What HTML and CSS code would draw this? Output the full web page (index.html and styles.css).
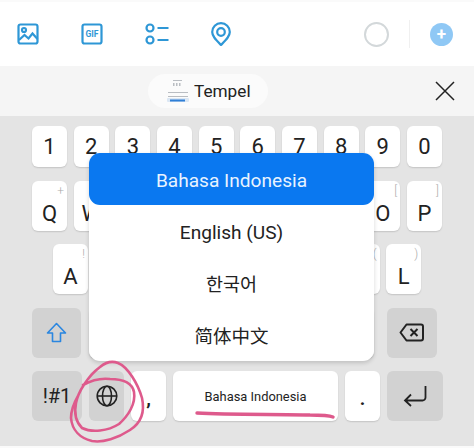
FILE: index.html
```html
<!DOCTYPE html>
<html lang="id">
<head>
<meta charset="utf-8">
<title>Keyboard</title>
<link rel="stylesheet" href="styles.css">
</head>
<body>
<div class="screen">
  <header class="toolbar">
    <div class="tools">
      <svg class="icon" width="22" height="22" viewBox="0 0 22 22" fill="none" stroke="#2e97d6" stroke-width="2.200"><rect x="1.500" y="1.500" width="19" height="19" rx="2"/><circle cx="7" cy="7" r="2"/><path d="M2 17l5.500-5 4 3.500 4-5 5 5.500"/></svg>
      <svg class="icon" width="22" height="22" viewBox="0 0 22 22" fill="none"><rect x="1.500" y="1.500" width="19" height="19" rx="2" stroke="#2e97d6" stroke-width="2.200"/><text x="11" y="14" class="gif">GIF</text></svg>
      <svg class="icon" width="24" height="22" viewBox="0 0 24 22" fill="none" stroke="#2e97d6" stroke-width="2.200"><circle cx="5" cy="5" r="3.500"/><circle cx="5" cy="17" r="3.500"/><path d="M12.500 5H23.500M12.500 17H23.500"/></svg>
      <svg class="icon" width="20" height="24" viewBox="0 0 20 24" fill="none" stroke="#2e97d6" stroke-width="2.200"><path d="M10 23C5 18 1.200 14.500 1.200 10a8.800 8.800 0 0 1 17.600 0C18.800 14.500 15 18 10 23z"/><circle cx="10" cy="10" r="3.800"/></svg>
    </div>
    <div class="status">
      <span class="ring"></span>
      <span class="divider"></span>
      <span class="plus">+</span>
    </div>
  </header>

  <section class="suggest">
    <div class="pill">
      <svg width="24" height="24" viewBox="0 0 24 24"><g fill="#b9bdc2"><rect x="7" y="1" width="9" height="1"/><rect x="7" y="4" width="1.500" height="3"/><rect x="10" y="4" width="1.500" height="3"/><rect x="13" y="4" width="1.500" height="3"/><rect x="2" y="13" width="20" height="1"/><rect x="2" y="17" width="20" height="1"/></g><rect x="1" y="19" width="22" height="4" rx="1" fill="#dbe7f4"/><rect x="4" y="20.500" width="15" height="2" fill="#2f7fd6"/></svg>
      <span>Tempel</span>
    </div>
    <svg class="close" width="20" height="20" viewBox="0 0 20 20" fill="none" stroke="#222" stroke-width="1.500"><path d="M1 1l18 18M19 1L1 19"/></svg>
  </section>

  <section class="keyboard">
    <div class="row row-digits">
      <div class="key">1</div><div class="key">2</div><div class="key">3</div><div class="key">4</div><div class="key">5</div><div class="key">6</div><div class="key">7</div><div class="key">8</div><div class="key">9</div><div class="key">0</div>
    </div>
    <div class="row">
      <div class="key low"><i>+</i>Q</div><div class="key low">W</div><div class="key low">E</div><div class="key low">R</div><div class="key low">T</div><div class="key low">Y</div><div class="key low">U</div><div class="key low">I</div><div class="key low"><i>[</i>O</div><div class="key low"><i>]</i>P</div>
    </div>
    <div class="row row-home">
      <div class="key low"><i>!</i>A</div><div class="key low">S</div><div class="key low">D</div><div class="key low">F</div><div class="key low">G</div><div class="key low">H</div><div class="key low">J</div><div class="key low"><i>(</i>K</div><div class="key low"><i>)</i>L</div>
    </div>
    <div class="row">
      <div class="key fn shift">
        <svg width="21" height="21" viewBox="0 0 21 21" fill="none" stroke="#2a86e0" stroke-width="1.600" stroke-linejoin="round"><path d="M10.500 1.500L19.500 11H14.500V19.500H6.500V11H1.500z"/></svg>
      </div>
      <div class="key low">Z</div><div class="key low">X</div><div class="key low">C</div><div class="key low">V</div><div class="key low">B</div><div class="key low">N</div><div class="key low"><i>?</i>M</div>
      <div class="key fn back">
        <svg width="25" height="19" viewBox="0 0 25 19" fill="none" stroke="#222" stroke-width="2" stroke-linejoin="round"><path d="M7.500 1.500H22a2 2 0 0 1 2 2v12a2 2 0 0 1-2 2H7.500L1.500 9.500z"/><path d="M11.500 6l7 7M18.500 6l-7 7"/></svg>
      </div>
    </div>
    <div class="row row-bottom">
      <div class="key fn sym">!#1</div>
      <div class="key fn globe">
        <svg width="22" height="22" viewBox="0 0 22 22" fill="none" stroke="#222" stroke-width="1.600"><circle cx="11" cy="11" r="9.800"/><ellipse cx="11" cy="11" rx="4.500" ry="9.800"/><path d="M1.200 11h19.600"/></svg>
      </div>
      <div class="key low punct">,</div>
      <div class="key space">Bahasa Indonesia</div>
      <div class="key low punct">.</div>
      <div class="key fn enter">
        <svg width="24" height="22" viewBox="0 0 24 22" fill="none" stroke="#222" stroke-width="1.800"><path d="M22.500 1V12.500a3 3 0 0 1-3 3H2M8 9.500l-6 6 6 5.500"/></svg>
      </div>
    </div>
  </section>

  <ul class="menu">
    <li class="active latin">Bahasa Indonesia</li>
    <li class="latin">English (US)</li>
    <li class="cjk-kr">한국어</li>
    <li class="cjk-sc">简体中文</li>
  </ul>

  <svg class="scribble" width="474" height="448" viewBox="0 0 474 448" fill="none" stroke="#de5a8c" stroke-linecap="round" stroke-linejoin="round">
    <path stroke-width="2.600" d="M83 385C92 380 102 378 110 379C122 379 132 382 134 392C136 404 128 416 119 424C108 431 92 433 82 428C76 422 74 413 76 403C78 392 88 376 100 367C106 362 113 361 118 363C128 367 138 384 142 398C145 412 141 423 130 430C118 438 103 443 92 441C80 438 72 430 71 418C71 410 74 403 78 396"/>
    <path stroke-width="3.400" d="M197 413C230 415 280 414 310 415C320 415 328 415 333 417"/>
  </svg>
</div>
</body>
</html>
```

FILE: styles.css
```css
* { box-sizing: border-box; }
html, body { margin: 0; padding: 0; }
body { background: #fafafa; font-family: Roboto, "Noto Sans", sans-serif; color: #222; }
.screen { position: relative; width: 474px; height: 448px; padding-top: 2px; overflow: hidden; }

.toolbar { height: 64px; background: #fff; display: flex; align-items: center; justify-content: space-between; padding: 0 21px 0 17px; }
.tools { display: flex; align-items: center; gap: 42px; }
.gif { font: 700 8.500px Roboto, sans-serif; fill: #2e97d6; text-anchor: middle; }
.status { display: flex; align-items: center; }
.ring { width: 25px; height: 25px; border-radius: 50%; border: 2px solid #d3d8da; }
.divider { width: 1px; height: 28px; background: #f0f0f0; margin: 0 20px 0 20px; }
.plus { width: 23px; height: 23px; border-radius: 50%; background: #8fc8f5; color: #fff; font-size: 17px; font-weight: 700; line-height: 22px; text-align: center; }

.suggest { height: 50px; background: #f5f5f5; display: flex; align-items: center; justify-content: space-between; padding: 0 11px 0 148px; }
.pill { width: 120px; height: 34px; border-radius: 17px; background: #fbfbfb; display: flex; align-items: center; gap: 4px; padding-left: 18px; font-size: 17.200px; }
.close { margin-right: 8px; }

.keyboard { height: 330px; background: #e4e4e4; padding: 10px 32px 0; display: flex; flex-direction: column; gap: 13.500px; }
.row { display: flex; gap: 6.670px; height: 50px; }
.row-digits { height: 41px; }
.row-home { padding: 0 21px; }
.row-bottom { gap: 7px; }

.key { position: relative; flex: 0 0 35px; background: #fff; border-radius: 6px; box-shadow: 0 1px 1.500px rgba(0,0,0,.14); display: flex; align-items: center; justify-content: center; font-size: 22px; color: #222; }
.key.low { align-items: flex-end; padding-bottom: 5px; }
.key i { position: absolute; top: 3px; right: 3px; font-size: 12px; font-style: normal; font-weight: 300; color: #aaa; line-height: 14px; }
.key.fn { background: #d2d2d2; box-shadow: none; }
.shift { flex-basis: 49px; margin-right: 1.330px; }
.back { flex-basis: 50px; margin-left: 6.300px; }
.sym { flex-basis: 50px; font-size: 20px; }
.globe { flex-basis: 35px; }
.space { flex-basis: 165px; font-size: 12.900px; }
.enter { flex-basis: 56px; }
.key.punct { font-size: 19px; font-weight: 700; padding-bottom: 11px; }

.menu { position: absolute; left: 89px; top: 153px; width: 285px; margin: 0; padding: 0; list-style: none; background: #fff; border-radius: 11px; box-shadow: 0 2px 4px rgba(0,0,0,.16); }
.menu li { height: 52px; display: flex; align-items: center; justify-content: center; font-size: 18.500px; color: #222; }
.menu .latin { font-size: 19.100px; padding-top: 3px; }
.menu .active { background: #0a78f0; color: #e8f3ff; border-radius: 11px; }
.cjk-kr { font-family: "Noto Sans CJK KR", sans-serif; }
.cjk-sc { font-family: "Noto Sans CJK SC", sans-serif; }

.scribble { position: absolute; left: 0; top: 0; pointer-events: none; }
```
